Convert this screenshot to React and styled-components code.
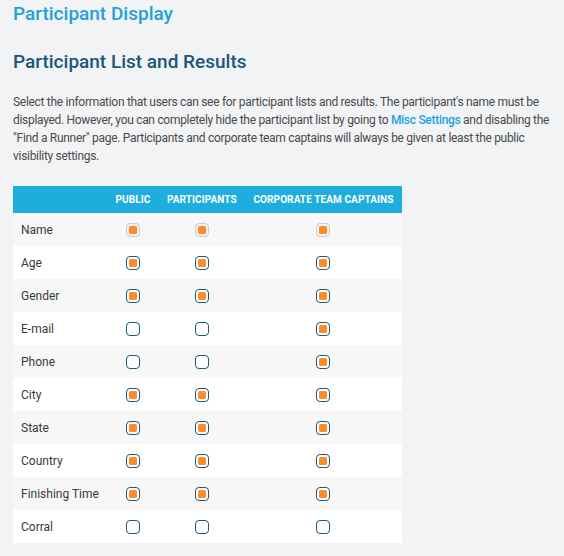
import React from "react";
import styled, { createGlobalStyle } from "styled-components";

const Global = createGlobalStyle`
  html, body { margin: 0; padding: 0; background: #f2f3f5; }
  body { font-family: Roboto, "Liberation Sans", Arial, sans-serif; }
`;

const Page = styled.div`
  padding: 0 13px 14px;
`;

const Title = styled.h1`
  margin: 0;
  font-size: 19px;
  line-height: 28px;
  font-weight: 500;
  color: #23a1d9;
`;

const Subtitle = styled.h2`
  margin: 20px 0 0;
  font-size: 19px;
  line-height: 28px;
  font-weight: 500;
  color: #18587a;
`;

const Para = styled.p`
  margin: 17px 0 0;
  font-size: 12px;
  line-height: 18px;
  letter-spacing: -0.3px;
  color: #4a4a4a;
`;

const Link = styled.a`
  color: #17a6e2;
  font-weight: 500;
  text-decoration: none;
`;

const Table = styled.table`
  margin-top: 21px;
  width: 389px;
  border-collapse: collapse;
  border-spacing: 0;
`;

const HeadCell = styled.th`
  background: #1daedd;
  color: #fff;
  font-size: 10px;
  font-weight: 700;
  text-transform: uppercase;
  height: 27px;
  padding: 0 8px;
  text-align: center;
  white-space: nowrap;
  letter-spacing: 0.1px;
`;

const Row = styled.tr`
  background: ${(p) => (p.$alt ? "#f7f7f7" : "#ffffff")};
`;

const LabelCell = styled.td`
  height: 33px;
  padding: 0 8px;
  font-size: 12px;
  color: #3a3a3a;
  white-space: nowrap;
`;

const BoxCell = styled.td`
  height: 33px;
  padding: 0 8px;
  text-align: center;
  vertical-align: middle;
  line-height: 0;
`;

const Box = styled.span`
  display: inline-flex;
  align-items: center;
  justify-content: center;
  box-sizing: border-box;
  width: 14px;
  height: 14px;
  border-radius: 4px;
  border: 1.5px solid ${(p) => (p.$disabled ? "#cfcfcf" : "#1d5876")};
  background: ${(p) => (p.$disabled ? "#f1f1f1" : "#ffffff")};
  vertical-align: middle;
`;

const Fill = styled.span`
  width: 8px;
  height: 8px;
  border-radius: 1.5px;
  background: #ff8c2a;
`;

const Check = ({ on, disabled }) => (
  <Box $disabled={disabled}>{on ? <Fill /> : null}</Box>
);

const rows = [
  ["Name", true, true, true, true],
  ["Age", true, true, true],
  ["Gender", true, true, true],
  ["E-mail", false, false, true],
  ["Phone", false, false, true],
  ["City", true, true, true],
  ["State", true, true, true],
  ["Country", true, true, true],
  ["Finishing Time", true, true, true],
  ["Corral", false, false, false],
];

export default function App() {
  return (
    <Page>
      <Global />
      <Title>Participant Display</Title>
      <Subtitle>Participant List and Results</Subtitle>
      <Para>
        Select the information that users can see for participant lists and
        results. The participant's name must be displayed. However, you can
        completely hide the participant list by going to{" "}
        <Link href="#">Misc Settings</Link> and disabling the "Find a Runner"
        page. Participants and corporate team captains will always be given at
        least the public visibility settings.
      </Para>
      <Table>
        <thead>
          <tr>
            <HeadCell />
            <HeadCell>Public</HeadCell>
            <HeadCell>Participants</HeadCell>
            <HeadCell>Corporate Team Captains</HeadCell>
          </tr>
        </thead>
        <tbody>
          {rows.map(([label, a, b, c, dis], i) => (
            <Row key={label} $alt={i % 2 === 0}>
              <LabelCell>{label}</LabelCell>
              <BoxCell><Check on={a} disabled={dis} /></BoxCell>
              <BoxCell><Check on={b} disabled={dis} /></BoxCell>
              <BoxCell><Check on={c} disabled={dis} /></BoxCell>
            </Row>
          ))}
        </tbody>
      </Table>
    </Page>
  );
}
